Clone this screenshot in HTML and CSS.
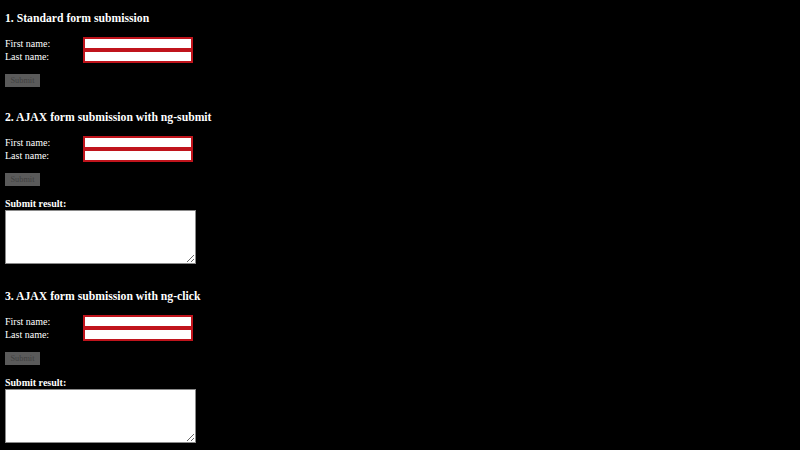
FILE: index.html
```html
<!DOCTYPE html>
<html>
<head>
<meta charset="utf-8">
<link rel="stylesheet" href="styles.css">
</head>
<body>
<section class="demo">
  <h3 class="title">1. Standard form submission</h3>
  <form class="form">
    <div class="row"><label class="lbl">First name:</label><input class="field" type="text"></div>
    <div class="row"><label class="lbl">Last name:</label><input class="field" type="text"></div>
    <button class="btn" type="submit" disabled>Submit</button>
  </form>
</section>
<section class="demo">
  <h3 class="title">2. AJAX form submission with ng-submit</h3>
  <form class="form">
    <div class="row"><label class="lbl">First name:</label><input class="field" type="text"></div>
    <div class="row"><label class="lbl">Last name:</label><input class="field" type="text"></div>
    <button class="btn" type="submit" disabled>Submit</button>
  </form>
  <div class="result-label">Submit result:</div>
  <textarea class="result"></textarea>
</section>
<section class="demo">
  <h3 class="title">3. AJAX form submission with ng-click</h3>
  <form class="form">
    <div class="row"><label class="lbl">First name:</label><input class="field" type="text"></div>
    <div class="row"><label class="lbl">Last name:</label><input class="field" type="text"></div>
    <button class="btn" type="button" disabled>Submit</button>
  </form>
  <div class="result-label">Submit result:</div>
  <textarea class="result"></textarea>
</section>
</body>
</html>
```

FILE: styles.css
```css
html, body {
  margin: 0;
  padding: 0;
  background: #000;
}
body {
  padding: 0 5px;
  color: #fff;
  font-family: "Liberation Serif", "Times New Roman", serif;
  font-size: 10px;
}
.demo {
  display: flex;
  flex-direction: column;
  align-items: flex-start;
}
.title {
  margin: 11px 0 11px;
  font-size: 11.7px;
  line-height: 15px;
  font-weight: bold;
}
.demo + .demo .title {
  margin-top: 23px;
}
.form {
  display: flex;
  flex-direction: column;
  align-items: flex-start;
  margin: 0;
}
.row {
  display: flex;
  align-items: center;
  height: 13px;
}
.lbl {
  width: 78px;
  line-height: 13px;
}
.field {
  box-sizing: border-box;
  width: 110px;
  height: 13px;
  margin: 0;
  padding: 0;
  border: 2px solid #c0141c;
  background: #fff;
  outline: none;
}
.btn {
  box-sizing: border-box;
  margin-top: 11px;
  width: 35px;
  height: 13px;
  padding: 0;
  border: none;
  background: #5a5a5a;
  color: #404040;
  font-family: "Liberation Serif", "Times New Roman", serif;
  font-size: 8.3px;
  line-height: 13px;
}
.result-label {
  margin-top: 11px;
  font-weight: bold;
  line-height: 13px;
}
.result {
  box-sizing: border-box;
  display: block;
  width: 191px;
  height: 54px;
  margin: 0 0 2px;
  border: 1px solid #8a8a8a;
  background: #fff;
}
```
